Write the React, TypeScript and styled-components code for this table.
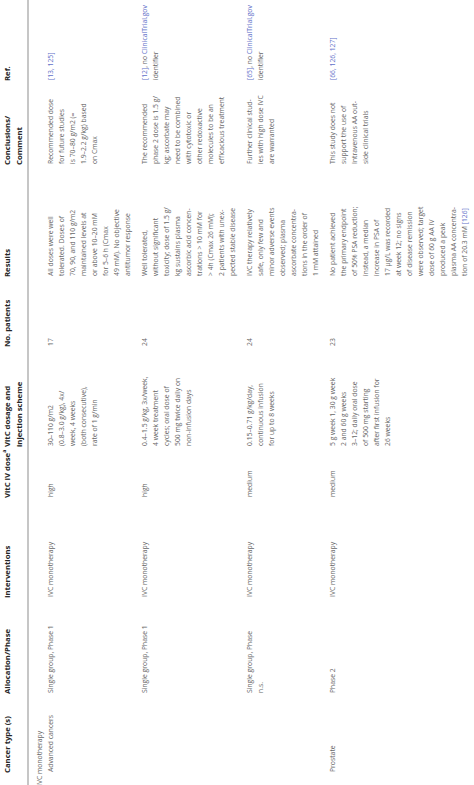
import React from "react";
import styled, { createGlobalStyle } from "styled-components";

const Global = createGlobalStyle`
  html, body { margin: 0; padding: 0; background: #ffffff; }
  #root { width: 474px; height: 785px; }
`;

const Viewport = styled.div`
  width: 474px;
  height: 785px;
  overflow: hidden;
  background: #ffffff;
`;

/* The table is laid out normally, then turned a quarter turn counter-clockwise
   so that its header runs down the left edge of the page. */
const Rotated = styled.div`
  width: 860px;
  height: 474px;
  transform-origin: 0 0;
  transform: translateY(785px) rotate(-90deg);
  font-family: "Open Sans", "Noto Sans", sans-serif;
`;

const COLS = "91px 96px 100px 51px 100px 70px 112px 84px 156px";

const HeaderRow = styled.div`
  display: grid;
  grid-template-columns: ${COLS};
  height: 29px;
  padding-top: 1px;
  box-sizing: border-box;
  border-bottom: 2px solid #c6c6c6;
`;

const HeadCell = styled.div<{ $first?: boolean }>`
  padding-left: ${(p) => (p.$first ? "12px" : "0")};
  font-size: 7.8px;
  font-weight: 700;
  line-height: 12px;
  color: #262626;
  white-space: nowrap;
  letter-spacing: -0.05px;
`;

const Sup = styled.sup`
  font-size: 5px;
  line-height: 0;
  vertical-align: 4px;
`;

const GroupRow = styled.div`
  padding-top: 5px;
  font-size: 6.8px;
  line-height: 11px;
  color: #666666;
  white-space: nowrap;
  margin-left: -1px;
`;

const DataRow = styled.div`
  display: grid;
  grid-template-columns: ${COLS};
  padding-bottom: 6px;
`;

const Cell = styled.div<{ $first?: boolean }>`
  padding-left: ${(p) => (p.$first ? "13px" : "1px")};
  font-size: 6.8px;
  line-height: 11px;
  color: #666666;
`;

const Line = styled.div`
  white-space: nowrap;
  height: 11px;
`;

const Link = styled.span`
  color: #6170c9;
`;

type Row = React.ReactNode[][];

const headers: React.ReactNode[][] = [
  ["Cancer type (s)"],
  ["Allocation/Phase"],
  ["Interventions"],
  [
    <>
      VitC IV dose<Sup>a</Sup>
    </>,
  ],
  ["VitC dosage and", "injection scheme"],
  ["No. patients"],
  ["Results"],
  ["Conclusions/", "Comment"],
  ["Ref."],
];

const rows: Row[] = [
  [
    ["Advanced cancers"],
    ["Single group, Phase 1"],
    ["IVC monotherapy"],
    ["high"],
    [
      "30–110 g/m2",
      "(0.8–3.0 g/kg), 4x/",
      "week, 4 weeks",
      "(both consecutive),",
      "rate of 1 g/min",
    ],
    ["17"],
    [
      "All doses were well",
      "tolerated. Doses of",
      "70, 90, and 110 g/m2",
      "maintained levels at",
      "or above 10–20 mM",
      "for 5–6 h (Cmax",
      "49 mM). No objective",
      "antitumor response",
    ],
    [
      "Recommended dose",
      "for future studies",
      "is 70–80 g/m2 (=",
      "1.9–2.2 g/kg) based",
      "on Cmax",
    ],
    [<Link>[13, 125]</Link>],
  ],
  [
    [],
    ["Single group, Phase 1"],
    ["IVC monotherapy"],
    ["high"],
    [
      "0.4–1.5 g/kg, 3x/week,",
      "4 week treatment",
      "cycles; oral dose of",
      "500 mg twice daily on",
      "non-infusion days",
    ],
    ["24"],
    [
      "Well tolerated,",
      "without significant",
      "toxicity; dose of 1.5 g/",
      "kg sustains plasma",
      "ascorbic acid concen-",
      "trations > 10 mM for",
      "> 4h (Cmax 26 mM);",
      "2 patients with unex-",
      "pected stable disease",
    ],
    [
      "The recommended",
      "phase 2 dose is 1.5 g/",
      "kg; ascorbate may",
      "need to be combined",
      "with cytotoxic or",
      "other redoxactive",
      "molecules to be an",
      "efficacious treatment",
    ],
    [
      <>
        <Link>[12]</Link>, no <Link>ClinicalTrial.gov</Link>
      </>,
      "identifier",
    ],
  ],
  [
    [],
    ["Single group, Phase", "n.s."],
    ["IVC monotherapy"],
    ["medium"],
    ["0.15–0.71 g/kg/day,", "continuous infusion", "for up to 8 weeks"],
    ["24"],
    [
      "IVC therapy relatively",
      "safe, only few and",
      "minor adverse events",
      "observed; plasma",
      "ascorbate concentra-",
      "tions in the order of",
      "1 mM attained",
    ],
    ["Further clinical stud-", "ies with high dose IVC", "are warranted"],
    [
      <>
        <Link>[65]</Link>, no <Link>ClinicalTrial.gov</Link>
      </>,
      "identifier",
    ],
  ],
  [
    ["Prostate"],
    ["Phase 2"],
    ["IVC monotherapy"],
    ["medium"],
    [
      "5 g week 1, 30 g week",
      "2 and 60 g weeks",
      "3–12; daily oral dose",
      "of 500 mg starting",
      "after first infusion for",
      "26 weeks",
    ],
    ["23"],
    [
      "No patient achieved",
      "the primary endpoint",
      "of 50% PSA reduction;",
      "instead, a median",
      "increase in PSA of",
      "17 µg/L was recorded",
      "at week 12; no signs",
      "of disease remission",
      "were observed; target",
      "dose of 60 g AA IV",
      "produced a peak",
      "plasma AA concentra-",
      <>
        tion of 20.3 mM <Link>[126]</Link>
      </>,
    ],
    [
      "This study does not",
      "support the use of",
      "Intravenous AA out-",
      "side clinical trials",
    ],
    [<Link>[66, 126, 127]</Link>],
  ],
];

export default function App() {
  return (
    <>
      <Global />
      <Viewport>
        <Rotated>
          <HeaderRow>
            {headers.map((h, i) => (
              <HeadCell key={i} $first={i === 0}>
                {h.map((l, j) => (
                  <div key={j}>{l}</div>
                ))}
              </HeadCell>
            ))}
          </HeaderRow>
          <GroupRow>IVC monotherapy</GroupRow>
          {rows.map((r, ri) => (
            <DataRow key={ri}>
              {r.map((c, ci) => (
                <Cell key={ci} $first={ci === 0}>
                  {c.map((l, li) => (
                    <Line key={li}>{l}</Line>
                  ))}
                </Cell>
              ))}
            </DataRow>
          ))}
        </Rotated>
      </Viewport>
    </>
  );
}
